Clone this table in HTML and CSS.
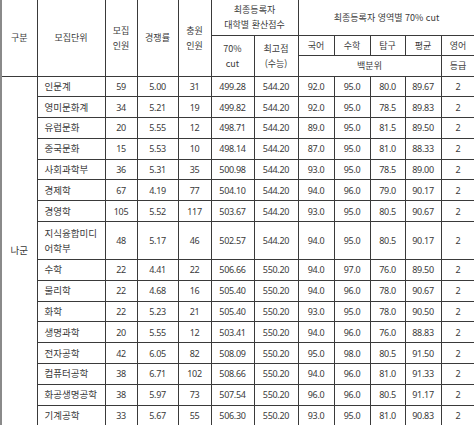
FILE: index.html
```html
<!DOCTYPE html>
<html lang="ko">
<head>
<meta charset="utf-8">
<link rel="stylesheet" href="styles.css">
</head>
<body>
<table class="tbl">
<colgroup>
<col class="c1"><col class="c2"><col class="c3"><col class="c4"><col class="c5"><col class="c6"><col class="c7"><col class="c8"><col class="c9"><col class="c10"><col class="c11"><col class="c12">
</colgroup>
<thead>
<tr class="h1">
<th rowspan="3">구분</th>
<th rowspan="3">모집단위</th>
<th rowspan="3">모집<br>인원</th>
<th rowspan="3">경쟁률</th>
<th rowspan="3">충원<br>인원</th>
<th colspan="2">최종등록자<br>대학별 환산점수</th>
<th colspan="5">최종등록자 영역별 70% cut</th>
</tr>
<tr class="h2">
<th rowspan="2" class="num">70%<br>cut</th>
<th rowspan="2">최고점<br>(수능)</th>
<th>국어</th><th>수학</th><th>탐구</th><th>평균</th><th>영어</th>
</tr>
<tr class="h3">
<th colspan="4">백분위</th>
<th>등급</th>
</tr>
</thead>
<tbody>
<tr><td rowspan="16" class="grp">나군</td><td class="name">인문계</td><td>59</td><td>5.00</td><td>31</td><td>499.28</td><td>544.20</td><td>92.0</td><td>95.0</td><td>80.0</td><td>89.67</td><td>2</td></tr>
<tr><td class="name">영미문화계</td><td>34</td><td>5.21</td><td>19</td><td>499.82</td><td>544.20</td><td>92.0</td><td>95.0</td><td>78.5</td><td>89.83</td><td>2</td></tr>
<tr><td class="name">유럽문화</td><td>20</td><td>5.55</td><td>12</td><td>498.71</td><td>544.20</td><td>89.0</td><td>95.0</td><td>81.5</td><td>89.50</td><td>2</td></tr>
<tr><td class="name">중국문화</td><td>15</td><td>5.53</td><td>10</td><td>498.14</td><td>544.20</td><td>87.0</td><td>95.0</td><td>81.0</td><td>88.33</td><td>2</td></tr>
<tr><td class="name">사회과학부</td><td>36</td><td>5.31</td><td>35</td><td>500.98</td><td>544.20</td><td>93.0</td><td>95.0</td><td>78.5</td><td>89.00</td><td>2</td></tr>
<tr><td class="name">경제학</td><td>67</td><td>4.19</td><td>77</td><td>504.10</td><td>544.20</td><td>94.0</td><td>96.0</td><td>79.0</td><td>90.17</td><td>2</td></tr>
<tr><td class="name">경영학</td><td>105</td><td>5.52</td><td>117</td><td>503.67</td><td>544.20</td><td>93.0</td><td>95.0</td><td>80.5</td><td>90.67</td><td>2</td></tr>
<tr class="tall"><td class="name">지식융합미디어학부</td><td>48</td><td>5.17</td><td>46</td><td>502.57</td><td>544.20</td><td>94.0</td><td>95.0</td><td>80.5</td><td>90.17</td><td>2</td></tr>
<tr><td class="name">수학</td><td>22</td><td>4.41</td><td>22</td><td>506.66</td><td>550.20</td><td>94.0</td><td>97.0</td><td>76.0</td><td>89.50</td><td>2</td></tr>
<tr><td class="name">물리학</td><td>22</td><td>4.68</td><td>16</td><td>505.40</td><td>550.20</td><td>94.0</td><td>96.0</td><td>78.0</td><td>90.67</td><td>2</td></tr>
<tr><td class="name">화학</td><td>22</td><td>5.23</td><td>21</td><td>505.40</td><td>550.20</td><td>93.0</td><td>95.0</td><td>78.0</td><td>90.50</td><td>2</td></tr>
<tr><td class="name">생명과학</td><td>20</td><td>5.55</td><td>12</td><td>503.41</td><td>550.20</td><td>94.0</td><td>96.0</td><td>76.0</td><td>88.83</td><td>2</td></tr>
<tr><td class="name">전자공학</td><td>42</td><td>6.05</td><td>82</td><td>508.09</td><td>550.20</td><td>95.0</td><td>98.0</td><td>80.5</td><td>91.50</td><td>2</td></tr>
<tr><td class="name">컴퓨터공학</td><td>38</td><td>6.71</td><td>102</td><td>508.66</td><td>550.20</td><td>94.0</td><td>96.0</td><td>81.0</td><td>91.33</td><td>2</td></tr>
<tr><td class="name">화공생명공학</td><td>38</td><td>5.97</td><td>73</td><td>507.54</td><td>550.20</td><td>96.0</td><td>96.0</td><td>80.5</td><td>91.17</td><td>2</td></tr>
<tr><td class="name">기계공학</td><td>33</td><td>5.67</td><td>55</td><td>506.30</td><td>550.20</td><td>93.0</td><td>95.0</td><td>81.0</td><td>90.83</td><td>2</td></tr>
</tbody>
</table>
</body>
</html>
```
FILE: styles.css
```css
html, body {
  margin: 0;
  padding: 0;
  background: #ffffff;
}
body {
  overflow: hidden;
  height: 425px;
}
.tbl {
  border-collapse: collapse;
  table-layout: fixed;
  width: 474px;
  font-family: "Noto Sans", "Noto Sans CJK KR", sans-serif;
  font-size: 9px;
  color: #3a3a3a;
  line-height: 15px;
}
.c1 { width: 36px; }
.c2 { width: 68px; }
.c3 { width: 32px; }
.c4 { width: 41px; }
.c5 { width: 33px; }
.c6 { width: 43px; }
.c7 { width: 44px; }
.c8 { width: 36px; }
.c9 { width: 36px; }
.c10 { width: 35px; }
.c11 { width: 36px; }
.c12 { width: 34px; }
.tbl th, .tbl td {
  border: 1px solid #3a3a3a;
  padding: 0;
  text-align: center;
  vertical-align: middle;
  font-weight: normal;
  overflow: hidden;
}
.tbl th {
  font-family: "Noto Sans CJK KR", sans-serif;
  font-size: 9px;
}
.tbl thead tr.h1 th {
  border-top: none;
}
.tbl td.grp,
.tbl thead tr.h1 th:first-child {
  border-left: 2px solid #8a8a8a;
}
.h1 { height: 35px; }
.h2 { height: 20px; }
.h3 { height: 21px; }
.tbl tbody tr { height: 20.8px; }
.tbl tbody tr.tall { height: 38px; }
.tbl td {
  letter-spacing: -0.3px;
}
.tbl td.name {
  text-align: left;
  padding-left: 7px;
  font-family: "Noto Sans CJK KR", sans-serif;
  font-size: 9.5px;
  letter-spacing: 0;
  word-break: break-all;
}
.tbl td.grp {
  font-family: "Noto Sans CJK KR", sans-serif;
  font-size: 9.5px;
  letter-spacing: 0;
}
```
